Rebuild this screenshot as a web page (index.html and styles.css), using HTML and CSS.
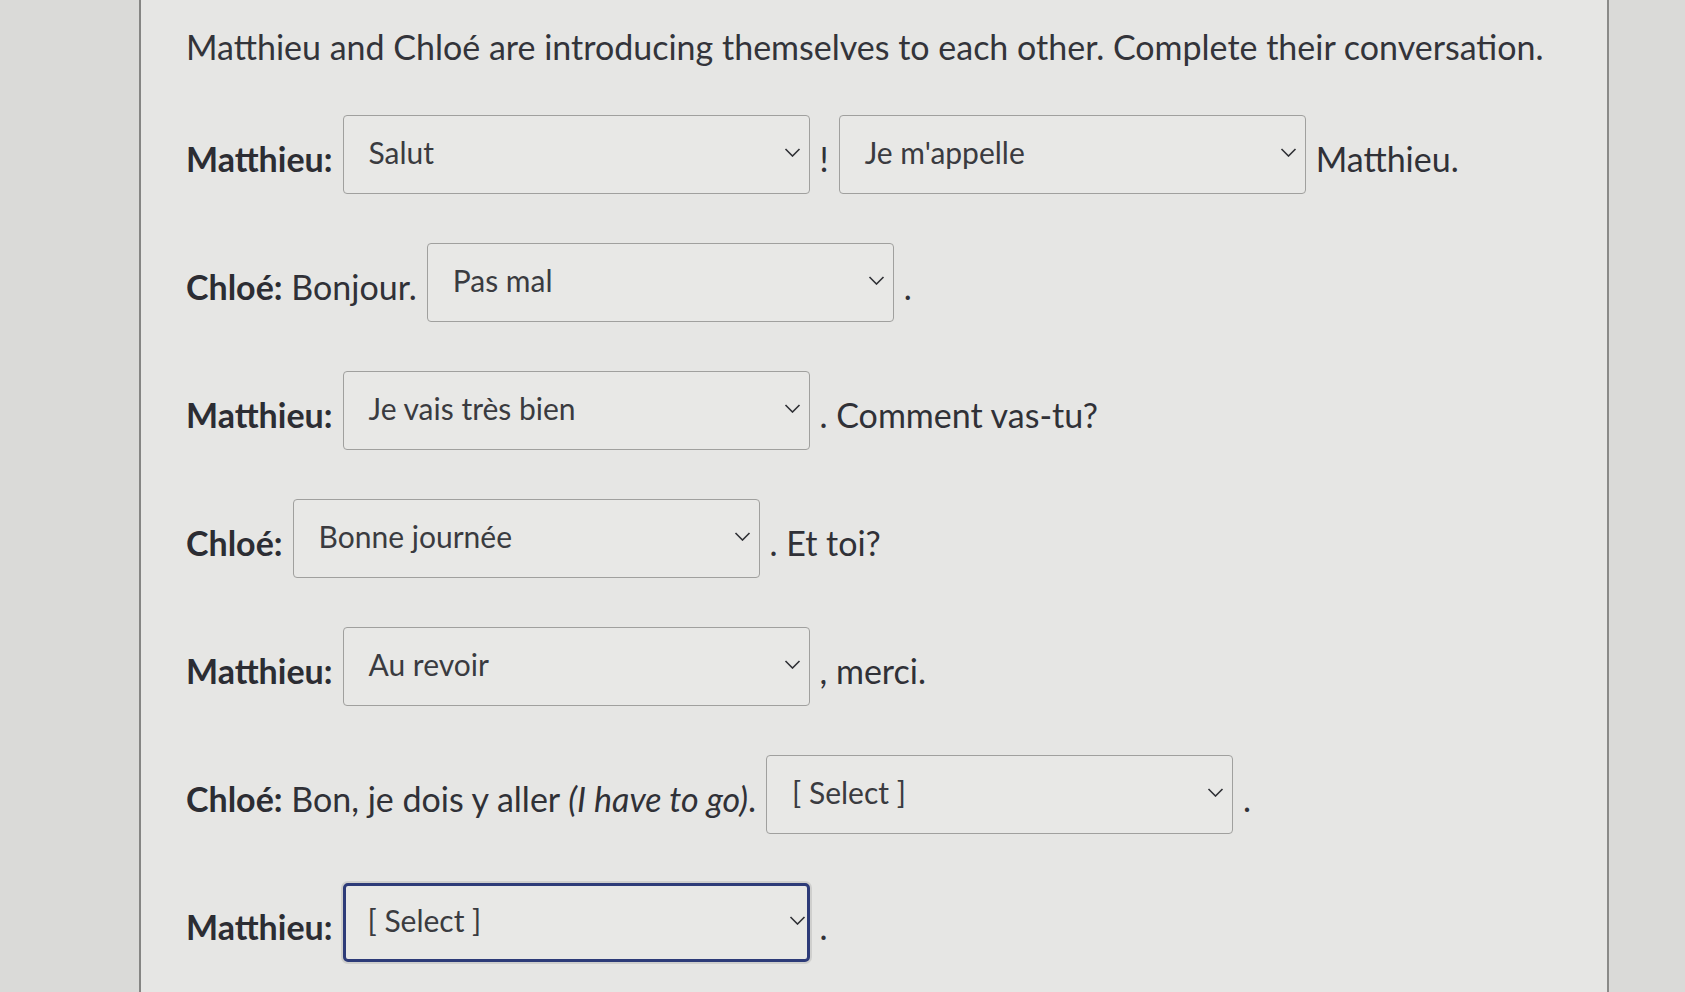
FILE: index.html
```html
<!DOCTYPE html>
<html lang="fr">
<head>
<meta charset="utf-8">
<title>Conversation</title>
<link rel="stylesheet" href="styles.css">
</head>
<body>
<div class="panel">
  <p class="prompt">Matthieu and Chloé are introducing themselves to each other. Complete their conversation.</p>

  <div class="row r1">
    <span class="who">Matthieu:</span>
    <div class="dd"><span class="val">Salut</span><svg class="chev" viewBox="0 0 16 9"><path d="M1 1l7 7 7-7"/></svg></div>
    <span class="txt">!</span>
    <div class="dd"><span class="val">Je m'appelle</span><svg class="chev" viewBox="0 0 16 9"><path d="M1 1l7 7 7-7"/></svg></div>
    <span class="txt">Matthieu.</span>
  </div>

  <div class="row">
    <span class="who">Chloé:</span><span class="txt">&nbsp;Bonjour.</span>
    <div class="dd"><span class="val">Pas mal</span><svg class="chev" viewBox="0 0 16 9"><path d="M1 1l7 7 7-7"/></svg></div>
    <span class="txt">.</span>
  </div>

  <div class="row">
    <span class="who">Matthieu:</span>
    <div class="dd"><span class="val">Je vais très bien</span><svg class="chev" viewBox="0 0 16 9"><path d="M1 1l7 7 7-7"/></svg></div>
    <span class="txt">. Comment vas-tu?</span>
  </div>

  <div class="row">
    <span class="who">Chloé:</span>
    <div class="dd"><span class="val">Bonne journée</span><svg class="chev" viewBox="0 0 16 9"><path d="M1 1l7 7 7-7"/></svg></div>
    <span class="txt">. Et toi?</span>
  </div>

  <div class="row">
    <span class="who">Matthieu:</span>
    <div class="dd"><span class="val">Au revoir</span><svg class="chev" viewBox="0 0 16 9"><path d="M1 1l7 7 7-7"/></svg></div>
    <span class="txt">, merci.</span>
  </div>

  <div class="row">
    <span class="who">Chloé:</span><span class="txt">&nbsp;Bon, je dois y aller <em>(I have to go)</em>.</span>
    <div class="dd"><span class="val">[ Select ]</span><svg class="chev" viewBox="0 0 16 9"><path d="M1 1l7 7 7-7"/></svg></div>
    <span class="txt">.</span>
  </div>

  <div class="row">
    <span class="who">Matthieu:</span>
    <div class="dd focus"><span class="val">[ Select ]</span><svg class="chev" viewBox="0 0 16 9"><path d="M1 1l7 7 7-7"/></svg></div>
    <span class="txt">.</span>
  </div>
</div>
</body>
</html>
```

FILE: styles.css
```css
html, body {
  margin: 0;
  padding: 0;
  height: 100%;
}
body {
  background: #dadad8;
  font-family: Lato, "Open Sans", sans-serif;
  color: #2f3035;
  overflow: hidden;
}
.panel {
  margin-left: 139px;
  width: 1470px;
  height: 100%;
  box-sizing: border-box;
  background: #e6e6e4;
  border-left: 2px solid #858583;
  border-right: 2px solid #8a8a88;
  padding: 25px 0 0 45px;
}
.prompt {
  margin: 0 0 46px 0;
  font-size: 34px;
  line-height: 44px;
  color: #33343a;
}
.row {
  display: flex;
  align-items: center;
  height: 79px;
  margin-bottom: 49px;
  font-size: 34px;
}
.who,
.txt {
  margin-top: 8px;
}
.who {
  font-weight: 700;
  color: #2c2d33;
}
.txt {
  color: #303137;
  white-space: pre;
}
.dd {
  box-sizing: border-box;
  width: 467px;
  height: 79px;
  margin: 0 10px;
  border: 1.5px solid #a0a09e;
  border-radius: 4px;
  background: #e8e8e6;
  display: flex;
  align-items: center;
  justify-content: space-between;
  padding: 0 8px 6px 25px;
  font-size: 30px;
  color: #3a3b40;
}
.dd.focus {
  border: 3.5px solid #2d3b78;
  border-radius: 5px;
  box-shadow: 0 0 0 2px #cfcfcd;
  padding-left: 22px;
  padding-right: 1px;
}
.chev {
  width: 17px;
  height: 9px;
  fill: none;
  stroke: #2f3035;
  stroke-width: 1.6;
  margin-top: 2px;
}
```
